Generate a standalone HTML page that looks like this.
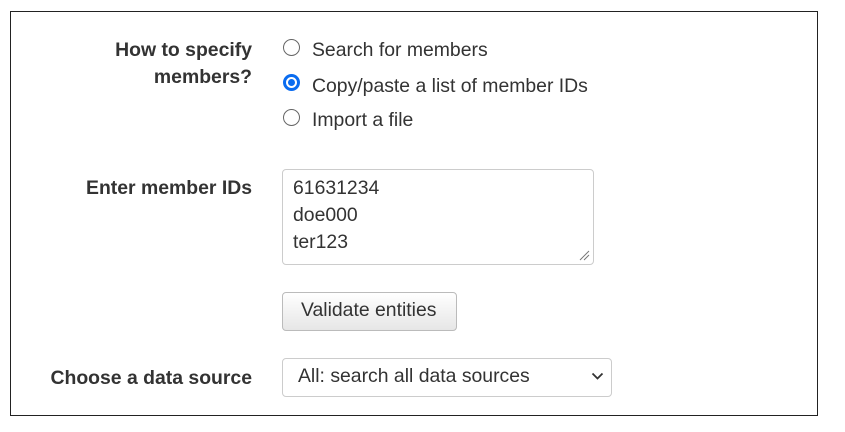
<!DOCTYPE html>
<html><head><style>
body{margin:0;background:#fff;font-family:"Liberation Sans",Arial,sans-serif;color:#333;}
.box{position:absolute;left:10px;top:11px;width:806px;height:403px;border:1px solid #222;}
.lbl{position:absolute;right:593px;font-weight:bold;font-size:19.4px;text-align:right;line-height:27px;color:#333}
.t{position:absolute;font-size:19.4px;color:#333;white-space:nowrap}
.r{position:absolute;width:15px;height:15px;border:1px solid #666;border-radius:50%;background:#fff}
.r.on{border:none;width:17px;height:17px;background:#0a6cf0}
.r.on:after{content:"";position:absolute;left:3px;top:3px;width:7px;height:7px;border-radius:50%;background:#0a6cf0;border:2px solid #fff}
</style></head><body>
<div class="box"></div>
<div class="lbl" style="top:37px">How to specify<br>members?</div>
<div class="r" style="left:283px;top:39px"></div><div class="t" style="left:312px;top:39px">Search for members</div>
<div class="r on" style="left:283px;top:74px"></div><div class="t" style="left:312px;top:75px">Copy/paste a list of member IDs</div>
<div class="r" style="left:283px;top:109px"></div><div class="t" style="left:312px;top:109px">Import a file</div>
<div class="lbl" style="top:175px">Enter member IDs</div>
<div style="position:absolute;left:282px;top:169px;width:310px;height:94px;border:1px solid #ccc;border-radius:4px"></div>
<div class="t" style="left:293px;top:175px;line-height:27px">61631234<br>doe000<br>ter123</div>
<svg style="position:absolute;left:578px;top:249px" width="12" height="12"><path d="M2 11L11 2M6 11L11 6" stroke="#777" stroke-width="1"/></svg>
<div style="position:absolute;left:282px;top:292px;width:173px;height:37px;border:1px solid #bbb;border-radius:4px;background:linear-gradient(#fff,#e6e6e6)"></div>
<div class="t" style="left:301px;top:299px">Validate entities</div>
<div class="lbl" style="top:365px">Choose a data source</div>
<div style="position:absolute;left:282px;top:358px;width:328px;height:37px;border:1px solid #ccc;border-radius:4px"></div>
<div class="t" style="left:298px;top:365px">All: search all data sources</div>
<svg style="position:absolute;left:591px;top:372px" width="13" height="9"><path d="M1.5 1.5L6.5 6.5L11.5 1.5" stroke="#333" stroke-width="1.8" fill="none"/></svg>
</body></html>
